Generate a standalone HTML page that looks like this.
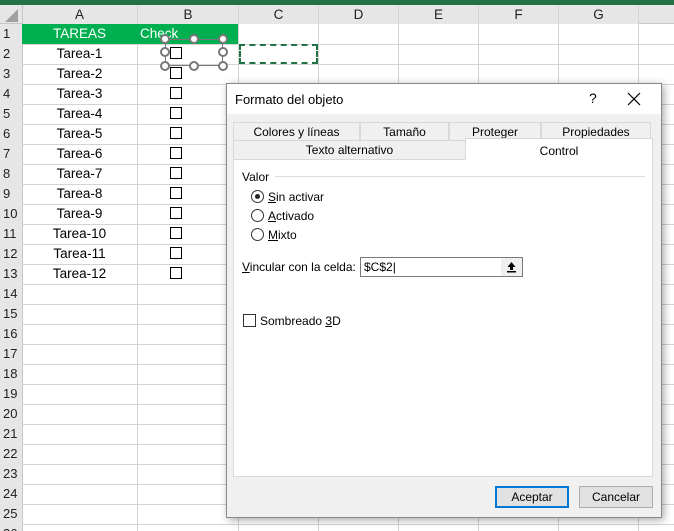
<!DOCTYPE html><html><head><style>
*{box-sizing:border-box;margin:0;padding:0}
html,body{width:674px;height:531px;overflow:hidden}
body{background:#fff;font-family:"Liberation Sans",Arial,sans-serif;position:relative;font-size:13.5px;color:#000}
.a{position:absolute}
.vl{position:absolute;top:5px;height:526px;width:1px;background:#d4d4d4}
.hl{position:absolute;left:0;width:674px;height:1px;background:#d4d4d4}
.rh{position:absolute;left:0;width:22px;height:20px;background:#e6e6e6;font-size:13px;line-height:20px;padding-left:3px;color:#222}
.ch{position:absolute;top:5px;height:19px;background:#e6e6e6;text-align:center;line-height:19px;color:#222}
.cell{position:absolute;left:22px;width:115px;height:20px;line-height:20px;text-align:center}
.cb{position:absolute;left:170px;width:12px;height:12px;border:1px solid #000;background:#fff}
.h{position:absolute;width:10px;height:10px;border:2px solid #777;border-radius:50%;background:#fff}
.tab{position:absolute;height:19px;background:#f0f0f0;border:1px solid #d9d9d9;border-bottom:none;text-align:center;line-height:19px;font-size:12px}
.rad{position:absolute;left:251px;width:13px;height:13px;border:1px solid #333;border-radius:50%;background:#fff}
.lbl{position:absolute;font-size:12px}
.btn{position:absolute;top:486px;height:22px;width:74px;background:#e1e1e1;border:1px solid #adadad;text-align:center;line-height:20px;font-size:12px}
</style></head><body>
<div class="a" style="left:0;top:0;width:674px;height:5px;background:#217346"></div>
<div class="a" style="left:0;top:5px;width:674px;height:19px;background:#e6e6e6;border-bottom:1px solid #c6c6c6"></div>
<div class="a" style="left:5px;top:9px;width:0;height:0;border-left:13px solid transparent;border-bottom:13px solid #a0a0a0"></div>
<div class="ch" style="left:22px;width:115px">A</div>
<div class="ch" style="left:138px;width:100px">B</div>
<div class="ch" style="left:239px;width:79px">C</div>
<div class="ch" style="left:319px;width:79px">D</div>
<div class="ch" style="left:399px;width:79px">E</div>
<div class="ch" style="left:479px;width:79px">F</div>
<div class="ch" style="left:559px;width:79px">G</div>
<div class="vl" style="left:22px;background:#c6c6c6"></div>
<div class="vl" style="left:137px"></div><div class="vl" style="left:238px"></div><div class="vl" style="left:318px"></div><div class="vl" style="left:398px"></div><div class="vl" style="left:478px"></div><div class="vl" style="left:558px"></div><div class="vl" style="left:638px"></div>
<div class="a" style="left:22px;top:24px;width:216px;height:20px;background:#00b050;color:#fff"><span class="a" style="left:0;width:115px;text-align:center;line-height:20px">TAREAS</span><span class="a" style="left:118px;line-height:20px">Check</span></div>
<div id="rows"></div>
<script>
var s='';for(var i=1;i<=26;i++){var t=24+(i-1)*20;s+='<div class="hl" style="top:'+(t+20)+'px"></div><div class="rh" style="top:'+t+'px">'+i+'</div>';
if(i>=2&&i<=13){s+='<div class="cell" style="top:'+t+'px">Tarea-'+(i-1)+'</div><div class="cb" style="top:'+(t+3)+'px"></div>';}}
document.getElementById('rows').innerHTML=s;
</script>
<div class="a" style="left:165px;top:39px;width:58px;height:27px;border:1px solid #777"></div>
<div class="h" style="left:160px;top:34px"></div><div class="h" style="left:189px;top:34px"></div><div class="h" style="left:218px;top:34px"></div>
<div class="h" style="left:160px;top:47px"></div><div class="h" style="left:218px;top:47px"></div>
<div class="h" style="left:160px;top:61px"></div><div class="h" style="left:189px;top:61px"></div><div class="h" style="left:218px;top:61px"></div>
<div class="a" style="left:239px;top:44px;width:79px;height:20px;border:2px dashed #217346"></div>
<div class="a" style="left:226px;top:83px;width:436px;height:435px;background:#f0f0f0;border:1px solid #888;box-shadow:2px 2px 8px rgba(0,0,0,.35)">
<div class="a" style="left:0;top:0;width:434px;height:30px;background:#fff"></div>
<div class="lbl" style="left:8px;top:8px;font-size:13px">Formato del objeto</div>
<div class="lbl" style="left:362px;top:6px;font-size:14px">?</div>
<svg class="a" style="left:400px;top:8px" width="14" height="14"><path d="M1 1L13 13M13 1L1 13" stroke="#000" stroke-width="1.2"/></svg>
</div>
<div class="tab" style="left:233px;top:122px;width:127px">Colores y líneas</div>
<div class="tab" style="left:360px;top:122px;width:89px">Tamaño</div>
<div class="tab" style="left:449px;top:122px;width:92px">Proteger</div>
<div class="tab" style="left:541px;top:122px;width:110px">Propiedades</div>
<div class="tab" style="left:233px;top:140px;width:233px">Texto alternativo</div>
<div class="a" style="left:233px;top:159px;width:420px;height:318px;background:#fff;border:1px solid #d9d9d9"></div>
<div class="tab" style="left:465px;top:138px;width:188px;height:22px;background:#fff;line-height:24px">Control</div>
<div class="lbl" style="left:242px;top:170px">Valor</div>
<div class="a" style="left:275px;top:176px;width:370px;height:1px;background:#dcdcdc"></div>
<div class="rad" style="top:190px"><div class="a" style="left:3px;top:3px;width:5px;height:5px;border-radius:50%;background:#222"></div></div>
<div class="rad" style="top:209px"></div><div class="rad" style="top:228px"></div>
<div class="lbl" style="left:268px;top:190px"><u>S</u>in activar</div>
<div class="lbl" style="left:268px;top:209px"><u>A</u>ctivado</div>
<div class="lbl" style="left:268px;top:228px"><u>M</u>ixto</div>
<div class="lbl" style="left:242px;top:260px"><u>V</u>incular con la celda:</div>
<div class="a" style="left:360px;top:257px;width:163px;height:20px;border:1px solid #7a7a7a;background:#fff;font-size:12px;line-height:18px;padding-left:3px">$C$2|</div>
<svg class="a" style="left:501px;top:258px" width="21" height="18"><rect width="21" height="18" fill="#f0f0f0"/><path d="M10.5 4L6.5 9H9V12H12V9H14.5Z" fill="#000"/><rect x="6" y="13" width="9" height="1.5" fill="#000"/></svg>
<div class="a" style="left:243px;top:314px;width:13px;height:13px;border:1px solid #333;background:#fff"></div>
<div class="lbl" style="left:260px;top:314px">Sombreado <u>3</u>D</div>
<div class="btn" style="left:495px;border:2px solid #0078d7;line-height:18px">Aceptar</div>
<div class="btn" style="left:579px">Cancelar</div>
</body></html>
